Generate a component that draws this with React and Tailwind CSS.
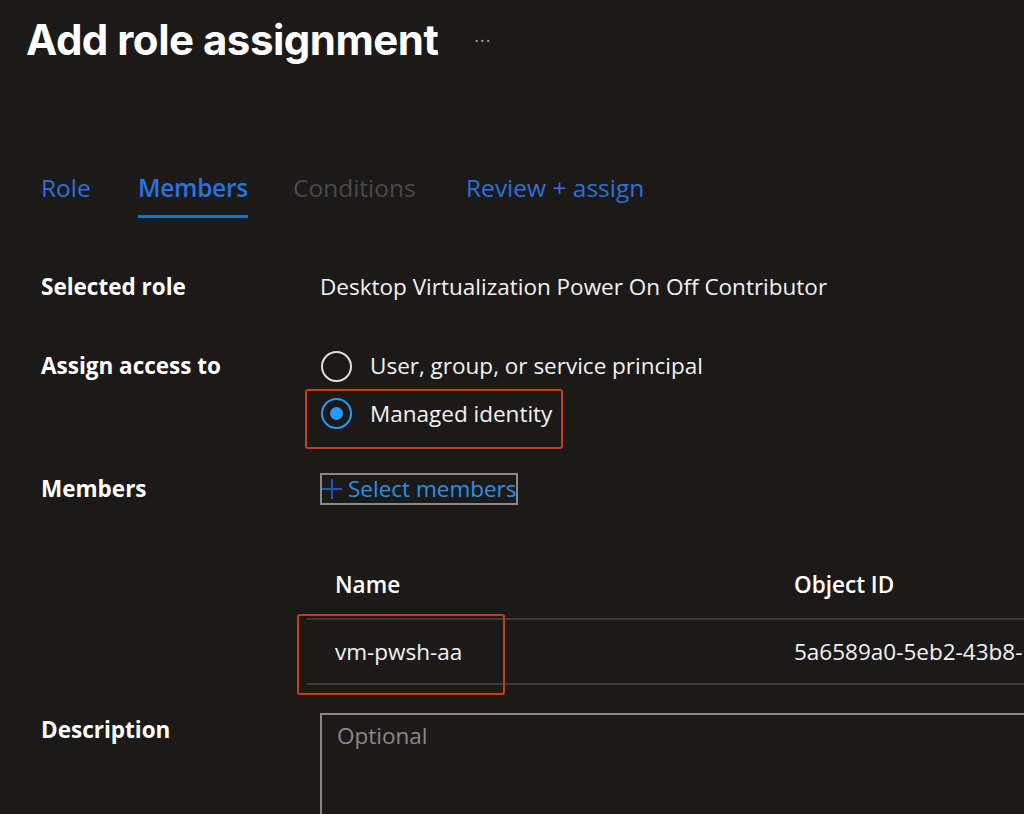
export default function App() {
  const font = { fontFamily: '"Open Sans", "Noto Sans", sans-serif' };
  return (
    <div className="w-[1024px] h-[814px] overflow-hidden bg-[#1b1a19] text-white" style={font}>
      {/* Title */}
      <div className="flex items-center pl-[26px] h-[80px]">
        <h1 className="text-[42px] font-bold tracking-[-0.5px] leading-none text-white" style={{ fontFamily: '"Inter", sans-serif' }}>
          Add role assignment
        </h1>
        <span className="ml-[36px] text-[18px] text-[#a19f9d] tracking-[1px] leading-none">···</span>
      </div>

      {/* Tabs */}
      <div className="flex items-start pl-[41px] mt-[90px] h-[48px] text-[24.5px] leading-[36px]">
        <div className="w-[97px] text-[#2f6fd6]">Role</div>
        <div className="w-[155px] flex flex-col">
          <span className="self-start text-[#2a72e0] font-semibold tracking-[-0.3px]">Members</span>
          <span className="mt-[9px] w-[110px] h-[3px] bg-[#0078d4]" />
        </div>
        <div className="w-[173px] text-[#4a4847]">Conditions</div>
        <div className="text-[#2f6fd6]">Review + assign</div>
      </div>

      {/* Selected role */}
      <div className="flex items-center pl-[41px] mt-[54px] h-[30px] text-[22.5px]">
        <div className="w-[279px] font-bold">Selected role</div>
        <div className="text-[#f3f2f1]">Desktop Virtualization Power On Off Contributor</div>
      </div>

      {/* Assign access to */}
      <div className="flex pl-[41px] mt-[47px] text-[22.5px]">
        <div className="w-[264px] font-bold leading-[34px]">Assign access to</div>
        <div className="flex flex-col">
          <div className="flex items-center h-[34px] pl-[16px]">
            <span className="w-[31px] h-[31px] rounded-full border-2 border-[#e1dfdd]" />
            <span className="ml-[18px] text-[#f3f2f1]">User, group, or service principal</span>
          </div>
          <div className="mt-[6px] w-[258px] h-[60px] border-2 border-[#c43e1c] rounded-[3px] flex items-start pl-[14px] pt-[7px]">
            <span className="w-[31px] h-[31px] rounded-full border-2 border-[#2899f5] flex items-center justify-center">
              <span className="w-[13px] h-[13px] rounded-full bg-[#2899f5]" />
            </span>
            <span className="ml-[18px] text-[#f3f2f1] leading-[31px]">Managed identity</span>
          </div>
        </div>
      </div>

      {/* Members */}
      <div className="flex items-center pl-[41px] mt-[24px] h-[32px] text-[22.5px]">
        <div className="w-[279px] font-bold">Members</div>
        <div className="flex items-center w-[198px] h-[32px] border-2 border-[#8a8886] whitespace-nowrap">
          <svg width="22" height="22" viewBox="0 0 22 22" className="-ml-[1px] shrink-0">
            <path d="M11 1v20M1 11h20" stroke="#1f57b0" strokeWidth="2" />
          </svg>
          <span className="ml-[5px] text-[#2d8fe3] leading-none">Select members</span>
        </div>
      </div>

      {/* Table */}
      <div className="ml-[307px] mt-[64px] text-[22.5px]">
        <div className="flex h-[49px] pl-[28px] font-semibold leading-[32px]">
          <div className="w-[459px]">Name</div>
          <div>Object ID</div>
        </div>
        <div className="relative">
          <div className="h-[2px] bg-[#3b3a39]" />
          <div className="flex items-center h-[63px] pl-[28px] text-[#f3f2f1] whitespace-nowrap overflow-hidden">
            <div className="w-[459px] shrink-0">vm-pwsh-aa</div>
            <div>5a6589a0-5eb2-43b8-</div>
          </div>
          <div className="h-[2px] bg-[#3b3a39]" />
          {/* annotation box */}
          <div className="absolute left-[-10px] top-[-4px] w-[208px] h-[81px] border-2 border-[#c43e1c] rounded-[3px]" />
        </div>
      </div>

      {/* Description */}
      <div className="flex pl-[41px] mt-[28px] text-[22.5px]">
        <div className="w-[279px] font-bold pt-[2px] leading-[30px]">Description</div>
        <div className="flex-1 h-[120px] border-2 border-r-0 border-[#8a8886] pl-[15px] pt-[6px] text-[#8a8886] leading-[30px]">
          Optional
        </div>
      </div>
    </div>
  );
}
